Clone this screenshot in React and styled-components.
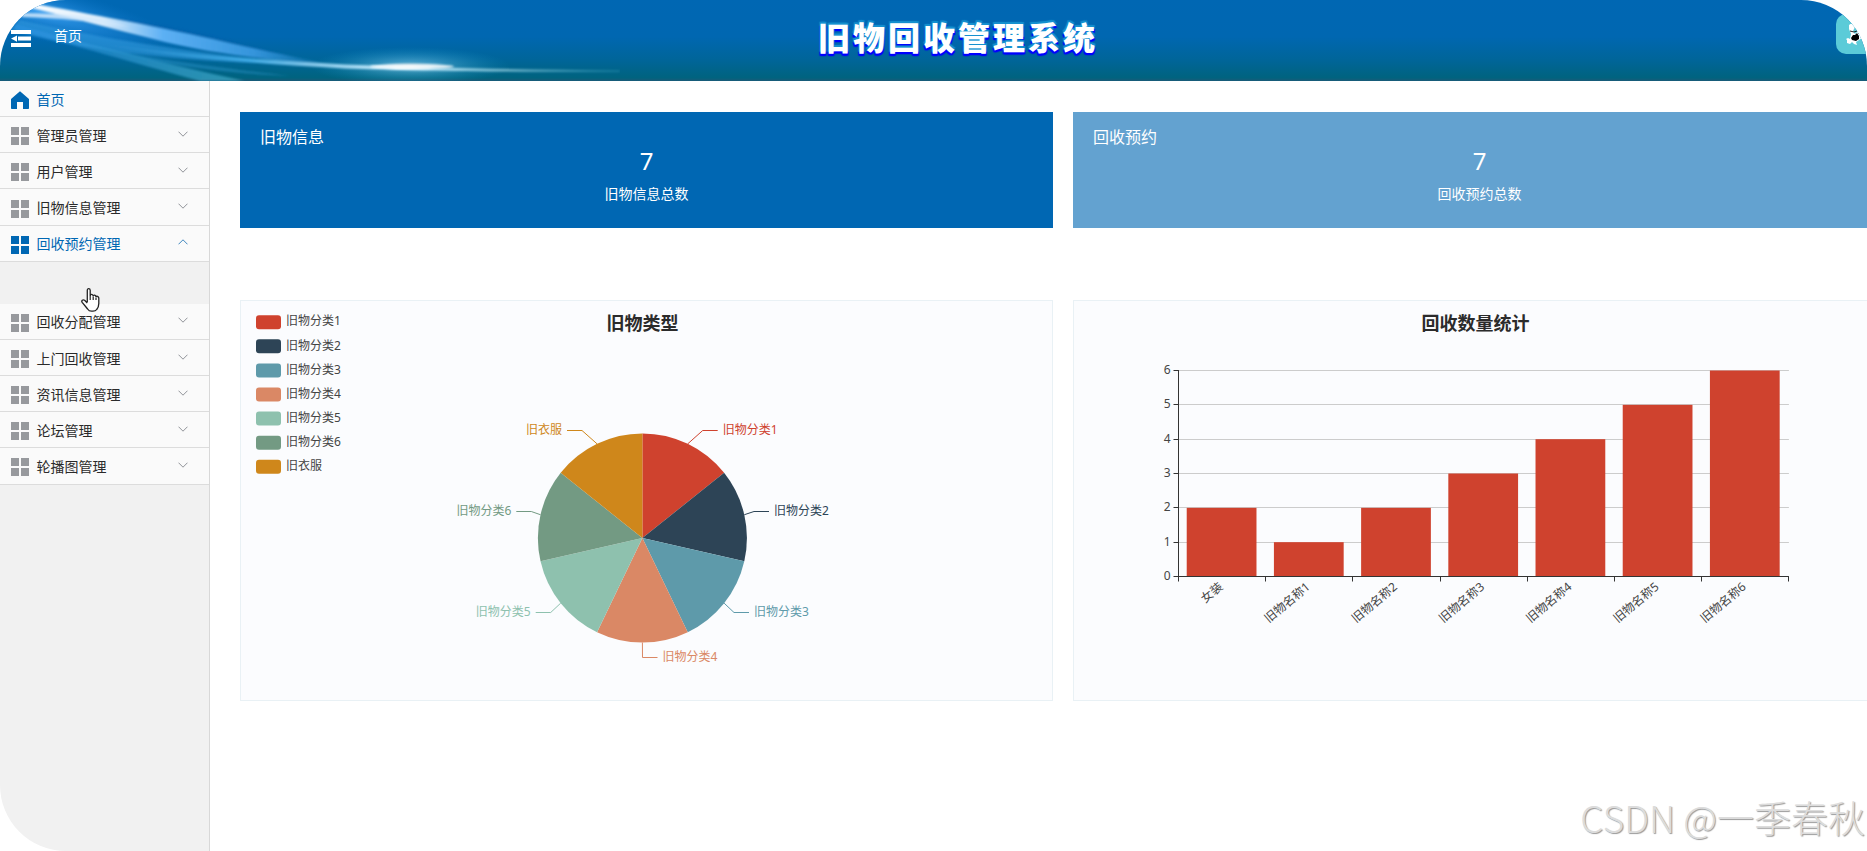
import React from "react";
import styled, { createGlobalStyle } from "styled-components";

const menus = [
  { name: "管理员管理" },
  { name: "用户管理" },
  { name: "旧物信息管理" },
  { name: "回收预约管理", open: true },
  { name: "回收分配管理" },
  { name: "上门回收管理" },
  { name: "资讯信息管理" },
  { name: "论坛管理" },
  { name: "轮播图管理" },
];

const cards = [
  { title: "旧物信息", count: 7, label: "旧物信息总数", color: "#0067b3" },
  { title: "回收预约", count: 7, label: "回收预约总数", color: "#63a2d0" },
];

// elbow: corner of the label line, side: 1 = right, -1 = left
const pieData = [
  { name: "旧物分类1", color: "#cf422e", elbow: [462.7, 130.5], side: 1 },
  { name: "旧物分类2", color: "#2d4456", elbow: [514, 211.5], side: 1 },
  { name: "旧物分类3", color: "#5e9aaa", elbow: [494, 312.5], side: 1 },
  { name: "旧物分类4", color: "#da8865", elbow: [402.5, 357.5], side: 1 },
  { name: "旧物分类5", color: "#8ec1ae", elbow: [310.7, 312.5], side: -1 },
  { name: "旧物分类6", color: "#739a83", elbow: [291.3, 211.5], side: -1 },
  { name: "旧衣服", color: "#cf871b", elbow: [342, 130.5], side: -1 },
];

const barData = [
  { name: "女装", value: 2 },
  { name: "旧物名称1", value: 1 },
  { name: "旧物名称2", value: 2 },
  { name: "旧物名称3", value: 3 },
  { name: "旧物名称4", value: 4 },
  { name: "旧物名称5", value: 5 },
  { name: "旧物名称6", value: 6 },
];

const PieChart = function () {
  const cx = 402.4;
  const cy = 238;
  const r = 104.5;
  const step = (Math.PI * 2) / pieData.length;
  const point = (angle) => [cx + r * Math.sin(angle), cy - r * Math.cos(angle)];
  return (
    <Chart viewBox="0 0 813 401">
      <ChartTitle x="402.5" y="30">
        旧物类型
      </ChartTitle>
      {pieData.map((item, i) => (
        <g key={item.name}>
          <rect x="16" y={15.2 + i * 24.1} width="25" height="14" rx="3" fill={item.color} />
          <ChartText x="46" y={25.4 + i * 24.1}>
            {item.name}
          </ChartText>
        </g>
      ))}
      {pieData.map((item, i) => {
        const [x1, y1] = point(i * step);
        const [x2, y2] = point((i + 1) * step);
        const [mx, my] = point((i + 0.5) * step);
        const [ex, ey] = item.elbow;
        return (
          <g key={item.name}>
            <path d={`M${cx} ${cy}L${x1} ${y1}A${r} ${r} 0 0 1 ${x2} ${y2}Z`} fill={item.color} />
            <path d={`M${mx} ${my}L${ex} ${ey}H${ex + 15 * item.side}`} fill="none" stroke={item.color} />
            <ChartText x={ex + 20 * item.side} y={ey + 3.8} $color={item.color} $anchor={item.side > 0 ? "start" : "end"}>
              {item.name}
            </ChartText>
          </g>
        );
      })}
    </Chart>
  );
};

const BarChart = function () {
  const left = 105.5;
  const bottom = 276.5;
  const band = 87.2;
  const unit = 34.33;
  const right = left + band * barData.length;
  const lineY = (n) => Math.round(bottom - n * unit - 0.5) + 0.5;
  return (
    <Chart viewBox="0 0 813 401">
      <ChartTitle x="402.5" y="30">
        回收数量统计
      </ChartTitle>
      {[0, 1, 2, 3, 4, 5, 6].map((n) => (
        <g key={n}>
          {n > 0 && <path d={`M${left} ${lineY(n)}H${right}`} stroke="#ccc" />}
          <path d={`M${left - 5} ${lineY(n)}H${left}`} stroke="#333" />
          <ChartText x="97.5" y={lineY(n) + 3.4} $anchor="end">
            {n}
          </ChartText>
        </g>
      ))}
      {barData.map((item, i) => (
        <rect
          key={item.name}
          x={left + band * i + band * 0.1 - 0.5}
          y={bottom - item.value * unit}
          width={band * 0.8}
          height={item.value * unit}
          fill="#cf422e"
        />
      ))}
      <path d={`M${left} 70V281.5M${left} ${bottom}H${right}`} stroke="#333" fill="none" />
      {barData.map((item, i) => {
        const x = left + band * (i + 0.5);
        return (
          <g key={item.name}>
            <path d={`M${Math.floor(left + band * (i + 1)) + 0.5} ${bottom}v5`} stroke="#333" />
            <ChartText transform={`translate(${x - 1} 285) rotate(-40)`} y="4" $anchor="end">
              {item.name}
            </ChartText>
          </g>
        );
      })}
    </Chart>
  );
};

const LightBeams = function () {
  return (
    <Beams viewBox="0 0 620 81" preserveAspectRatio="none">
      <defs>
        <linearGradient id="beam" x1="0" x2="1">
          <stop offset="0" stopColor="#fff" />
          <stop offset="0.25" stopColor="#d8ebfb" />
          <stop offset="0.45" stopColor="#5cb0f4" />
          <stop offset="0.75" stopColor="#3a9ae2" stopOpacity="0.9" />
          <stop offset="1" stopColor="#2d92d8" stopOpacity="0" />
        </linearGradient>
        <linearGradient id="ray" x1="0" x2="1">
          <stop offset="0" stopColor="#42a8e8" stopOpacity="0" />
          <stop offset="0.3" stopColor="#45b2ec" stopOpacity="0.8" />
          <stop offset="0.58" stopColor="#fff" />
          <stop offset="1" stopColor="#5fc6e0" stopOpacity="0.3" />
        </linearGradient>
        <linearGradient id="low" x1="0" x2="1">
          <stop offset="0" stopColor="#3399ee" stopOpacity="0.5" />
          <stop offset="1" stopColor="#45b0cc" stopOpacity="0.9" />
        </linearGradient>
        <radialGradient id="sky">
          <stop offset="0" stopColor="#3a9ff2" stopOpacity="0.95" />
          <stop offset="1" stopColor="#0d78cc" stopOpacity="0" />
        </radialGradient>
        <radialGradient id="flare">
          <stop offset="0" stopColor="#fff" />
          <stop offset="0.25" stopColor="#8edcff" stopOpacity="0.7" />
          <stop offset="1" stopColor="#18a0d8" stopOpacity="0" />
        </radialGradient>
        <filter id="soft" x="-10%" y="-30%" width="120%" height="160%">
          <feGaussianBlur stdDeviation="0.8" />
        </filter>
      </defs>
      <ellipse cx="40" cy="12" rx="150" ry="28" transform="rotate(14 40 12)" fill="url(#sky)" />
      <g filter="url(#soft)">
        <path d="M20 20C100 38 180 51 300 64C190 63 90 52 10 30Z" fill="#38a0e6" opacity="0.5" />
        <path d="M15 24C80 42 140 58 245 81H200C130 62 80 46 15 30Z" fill="url(#low)" opacity="0.75" />
        <path d="M90 45C130 54 170 62 290 76C200 72 140 60 90 45Z" fill="#3aa3dc" opacity="0.35" />
        <path d="M110 18C160 22 230 40 290 56C220 46 170 34 110 18Z" fill="#0659a5" opacity="0.35" />
        <path d="M30 3C85 13 165 28 225 42C260 50 300 58 330 64C280 62 210 53 165 42C110 28 65 16 27 7Z" fill="url(#beam)" />
        <path d="M22 13C60 13 90 16 130 27C90 21 60 18 22 17Z" fill="#d4e9fb" opacity="0.85" />
        <path d="M90 42C180 55 260 59 345 64.5C430 68 520 69.5 620 70.5V71.8C500 72 420 71 345 68.5C250 63 170 58 90 42Z" fill="url(#ray)" />
      </g>
      <ellipse cx="410" cy="66" rx="100" ry="19" fill="url(#flare)" opacity="0.6" />
      <ellipse cx="412" cy="66.5" rx="42" ry="2.6" fill="#fff" opacity="0.85" filter="url(#soft)" />
    </Beams>
  );
};

const Index = function () {
  return (
    <>
      <GlobalStyle />
      <Frame>
        <Header>
          <LightBeams />
          <FoldIcon viewBox="0 0 20 17">
            <path d="M0 0h20v4H0zM7 6.6h13v4H7zM0 13h20v4H0zM0 8.6l6-3.2V11.8z" fill="#fff" />
          </FoldIcon>
          <Crumb>首页</Crumb>
          <SystemName>旧物回收管理系统</SystemName>
          <Avatar viewBox="0 0 40 40">
            <rect width="40" height="40" rx="10" fill="#5bcbd8" />
            <path
              d="M13 11q2-2 5-1l1 3-2 4 2 3 5-5 3 1-1 8-6 4 1 3-3-1-2-2-2 2-3-1v-3l-1-1 2-1 2 1 1-5-2-5z"
              fill="#fff"
            />
            <path d="M14 17l4 1 3-1M22 19l3 1" stroke="#222" fill="none" />
            <path d="M15 24l2-3h2l2-2 2 3v3l-3 2-4-1z" fill="#000" />
          </Avatar>
        </Header>
        <Body>
          <Sidebar>
            <MenuItem $active>
              <MenuIcon viewBox="0 0 18 18">
                <path d="M9 0.2L18 8v9.2q0 .8-.8.8H12v-7H6v7H.8Q0 18 0 17.2V8z" />
              </MenuIcon>
              首页
            </MenuItem>
            {menus.map((menu) => (
              <React.Fragment key={menu.name}>
                <MenuItem $active={menu.open}>
                  <MenuIcon viewBox="0 0 18 18">
                    <path d="M0 0h8v8H0zM10 0h8v8h-8zM0 10h8v8H0zM10 10h8v8h-8z" />
                  </MenuIcon>
                  {menu.name}
                  <Arrow viewBox="0 0 10 6" $open={menu.open}>
                    <path d="M0.5 0.7L5 5.2L9.5 0.7" />
                  </Arrow>
                </MenuItem>
                {menu.open && <SubMenu />}
              </React.Fragment>
            ))}
          </Sidebar>
          <Main>
            {cards.map((card) => (
              <Card key={card.title} $color={card.color}>
                <CardTitle>{card.title}</CardTitle>
                <CardCount>{card.count}</CardCount>
                <CardLabel>{card.label}</CardLabel>
              </Card>
            ))}
            <Panel>
              <PieChart />
            </Panel>
            <Panel>
              <BarChart />
            </Panel>
          </Main>
        </Body>
      </Frame>
      <Pointer viewBox="0 0 19 24">
        <path
          d="M6.3 14V2.3Q6.3.7 7.7.7T9.2 2.3V8Q9.4 6.2 10.7 6.3T12.2 8.2Q12.5 6.9 13.7 7.1T15 9Q15.5 7.9 16.5 8.3T17.8 10V15.5Q17.8 19 15.7 21.5Q14.5 23.2 12 23.2H10.5Q8 23.2 6.6 21L1.2 14.3Q.3 13 1.3 12.2T3.6 12.2L6.3 15"
          fill="#fff"
          stroke="#222"
          strokeWidth="1.3"
        />
        <path d="M9.2 8v4M12.2 8.5V12M15 9.5V12" stroke="#222" strokeWidth="1.2" />
      </Pointer>
      <Watermark>CSDN @一季春秋</Watermark>
    </>
  );
};

export default Index;

const GlobalStyle = createGlobalStyle`
  body {
    margin: 0;
    background: #fff;
    overflow: hidden;
    font-family: "Noto Sans", "Noto Sans CJK SC", sans-serif;
  }
  * {
    box-sizing: border-box;
  }
`;

const Frame = styled.div`
  display: flex;
  flex-direction: column;
  width: 100%;
  height: 100vh;
  border-radius: 66px;
  overflow: hidden;
`;

const Header = styled.div`
  display: flex;
  align-items: center;
  position: relative;
  flex: none;
  height: 81px;
  padding: 0 0 5px 11px;
  background: linear-gradient(180deg, #0067b3 0%, #0067b1 45%, #006598 75%, #00637f 96%, #1a5a78 100%);
`;

const Beams = styled.svg`
  position: absolute;
  left: 0;
  top: 0;
  width: 620px;
  height: 81px;
`;

const FoldIcon = styled.svg`
  position: relative;
  width: 20px;
  height: 17px;
`;

const Crumb = styled.div`
  position: relative;
  margin: -4px 0 0 23px;
  color: #fff;
  font-size: 14px;
  line-height: 20px;
  white-space: nowrap;
`;

const SystemName = styled.div`
  margin: -1px auto 0;
  padding-right: 2px;
  color: #fff;
  font-size: 32px;
  font-weight: 900;
  line-height: 44px;
  letter-spacing: 3px;
  white-space: nowrap;
  text-shadow: -1px -2px 1px #1590cf, 1px -2px 1px #1590cf, -1px 2px 1px #00f, 1px 2px 1px #00f, 0 2px 1px #00f;
`;

const Avatar = styled.svg`
  flex: none;
  width: 40px;
  height: 40px;
  margin: -8px -9px 0 0;
`;

const Body = styled.div`
  display: flex;
  flex: 1;
  min-height: 0;
`;

const Sidebar = styled.div`
  flex: none;
  width: 210px;
  background: #f1f1f1;
  border-right: 1px solid #d8d8d8;
`;

const MenuItem = styled.div`
  display: flex;
  align-items: center;
  height: 36.17px;
  padding: 2px 21px 0 11px;
  gap: 7.5px;
  background: #fafafa;
  border-bottom: 1px solid #dcdcdc;
  color: ${(props) => (props.$active ? "#0067b3" : "#2a2a2a")};
  fill: ${(props) => (props.$active ? "#0067b3" : "#97999d")};
  font-size: 14px;
  line-height: 20px;
  white-space: nowrap;
`;

const MenuIcon = styled.svg`
  flex: none;
  width: 18px;
  height: 18px;
  margin-top: 1px;
`;

const Arrow = styled.svg`
  width: 10px;
  height: 6px;
  margin: -4px 0 0 auto;
  fill: none;
  stroke: ${(props) => (props.$open ? "#3f86bd" : "#909399")};
  transform: ${(props) => (props.$open ? "rotate(180deg)" : "none")};
`;

const SubMenu = styled.div`
  height: 42px;
`;

const Main = styled.div`
  display: grid;
  flex: 1;
  grid-template-columns: 813px 813px;
  grid-template-rows: 116.5px 401px;
  gap: 72px 20px;
  align-content: start;
  min-width: 0;
  padding: 30.5px 0 0 30px;
  overflow: hidden;
  background: #fff;
`;

const Card = styled.div`
  display: flex;
  flex-direction: column;
  align-items: center;
  padding: 14px 20px;
  color: #fff;
  background: ${(props) => props.$color};
`;

const CardTitle = styled.div`
  align-self: flex-start;
  font-size: 16px;
  line-height: 22px;
`;

const CardCount = styled.div`
  font-size: 24px;
  line-height: 26px;
`;

const CardLabel = styled.div`
  margin-top: 10px;
  font-size: 14px;
  line-height: 20px;
`;

const Panel = styled.div`
  background: #fbfcfe;
  box-shadow: inset 0 0 0 1px #e9f1f5;
`;

const Chart = styled.svg`
  display: block;
  width: 813px;
  height: 401px;
`;

const ChartTitle = styled.text`
  fill: #2b2b2b;
  font-size: 18px;
  font-weight: 700;
  text-anchor: middle;
`;

const ChartText = styled.text`
  fill: ${(props) => props.$color || "#444"};
  font-size: 12px;
  text-anchor: ${(props) => props.$anchor || "start"};
`;

const Pointer = styled.svg`
  position: absolute;
  left: 81px;
  top: 288px;
  width: 19px;
  height: 24px;
`;

const Watermark = styled.div`
  position: absolute;
  right: 2px;
  bottom: 9px;
  color: #dcdcdc;
  font-family: "Noto Sans CJK SC", sans-serif;
  font-size: 37px;
  font-weight: 300;
  line-height: 50px;
  white-space: nowrap;
  text-shadow: 1px 1px 1px #999;
`;
